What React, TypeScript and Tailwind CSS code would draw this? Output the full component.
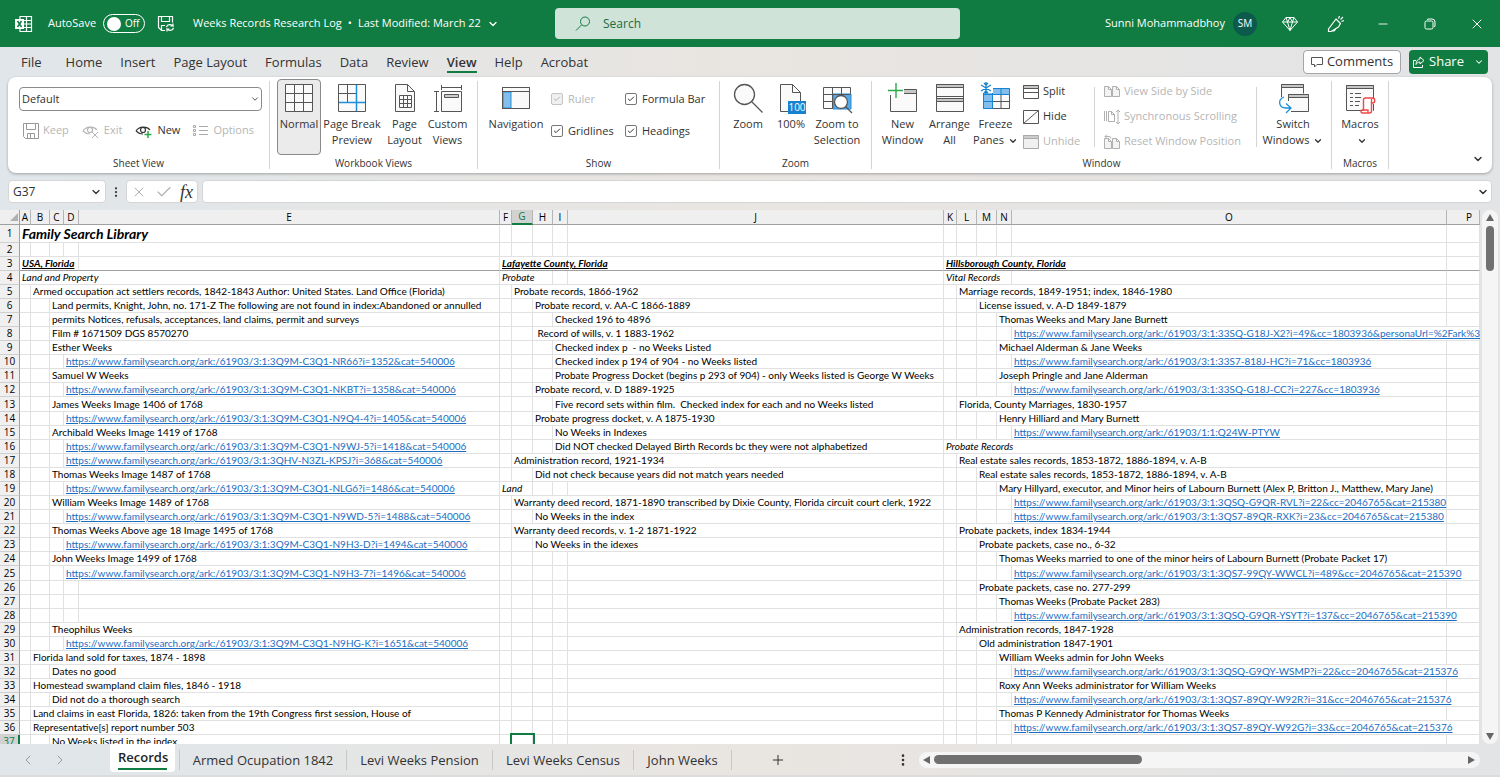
import { ReactNode } from "react";
import clsx from "clsx";
import { Check, ChevronDown, ChevronLeft, ChevronRight, Minus, Plus, X } from "lucide-react";
import { BsThreeDotsVertical } from "react-icons/bs";

type IconProps = {
  children: ReactNode;
  box?: string;
  className?: string;
};

const Icon = ({ children, box = "0 0 32 32", className = "size-8" }: IconProps) => (
  <svg viewBox={box} className={clsx("shrink-0", className)} fill="none" stroke="#555" aria-hidden="true">
    {children}
  </svg>
);

/* ---------- ribbon icons ---------- */

const NormalIcon = () => (
  <Icon>
    <path d="M2.5 2.5h27v27h-27z" fill="#fafafa" />
    <path d="M2.5 11.5h27M2.5 20.5h27M11.5 2.5v27M20.5 2.5v27" />
  </Icon>
);

const PageBreakIcon = () => (
  <Icon>
    <path d="M2.5 2.5h27v27h-27z" fill="#fafafa" />
    <path d="M2.5 11.5h18M11.5 2.5v18" />
    <path d="M20.5 3v26M3 20.5h26" stroke="#1e8fdc" strokeWidth="1.5" />
  </Icon>
);

const PageLayoutIcon = () => (
  <Icon>
    <path d="M6.5 2.5h12l7 7v20h-19z" fill="#fafafa" />
    <path d="M18.5 2.5v7h7M10.5 13.5h12v12h-12zM10.5 17.5h12M10.5 21.5h12M14.5 13.5v12M18.5 13.5v12" />
  </Icon>
);

const CustomViewsIcon = () => (
  <Icon>
    <path d="M9.5 9.5h20v20h-20z" fill="#fafafa" />
    <path d="M12.5 12.5h14v3h-14z" fill="#ccc" />
    <path d="M9.5 5.5h20M9.5 3v5M29.5 3v5M4.5 9.5v20M2 9.5h5M2 29.5h5" />
  </Icon>
);

const NavigationIcon = () => (
  <Icon>
    <path d="M2.5 5.5h27v21h-27z" fill="#fafafa" />
    <path d="M3 10h8v16H3z" fill="#83beec" stroke="#1e8fdc" />
    <path d="M2.5 5.5h27v21h-27zM2.5 9.5h27" />
  </Icon>
);

const ZoomIcon = () => (
  <Icon>
    <circle cx="12.5" cy="12.5" r="10" fill="#fafafa" strokeWidth="1.3" />
    <path d="M19.5 19.5l11 11" strokeWidth="1.3" />
  </Icon>
);

const HundredIcon = () => (
  <Icon>
    <path d="M5.5 2.5h12l8 8v19h-20z" fill="#fafafa" />
    <path d="M17.5 2.5v8h8" />
    <path d="M13 19h18v13H13z" fill="#1683d0" stroke="none" />
    <text x="22" y="29" textAnchor="middle" fontSize="10" fontFamily="Open Sans" fill="#fff" stroke="none">
      100
    </text>
  </Icon>
);

const ZoomSelectionIcon = () => (
  <Icon>
    <path d="M2.5 5.5h27v21h-27z" fill="#fafafa" />
    <path d="M12 12h18v15H12z" fill="#5aa9e6" stroke="#1e8fdc" />
    <path d="M2.5 12.5h27M2.5 19.5h9M11.5 5.5v21M20.5 5.5v7" />
    <circle cx="20" cy="20" r="6.5" fill="#fff" strokeWidth="1.3" />
    <path d="M24.5 24.5l6.5 6.5" strokeWidth="1.3" />
  </Icon>
);

const NewWindowIcon = () => (
  <Icon>
    <path d="M3.5 16v13.5h26v-22H17v4h-5" fill="#fafafa" stroke="none" />
    <path d="M17 8h12v3H17z" fill="#c8c6c4" stroke="none" />
    <path d="M3.5 13v16.5h26v-22H17M17 11.5h12.5" />
    <path d="M9 1v15M1 8.5h15" stroke="#2ba84a" strokeWidth="1.4" />
  </Icon>
);

const ArrangeIcon = () => (
  <Icon>
    <path d="M2.5 2.5h27v27h-27z" fill="#fafafa" />
    <path d="M2.5 2.5h27v3h-27zM2.5 16.5h27v3h-27z" fill="#c8c6c4" />
    <path d="M2.5 14.5h27" />
  </Icon>
);

const FreezeIcon = () => (
  <Icon>
    <path d="M3.5 6.5h26v20h-26z" fill="#fafafa" />
    <path d="M3 6h27v7H12v14H3z" fill="#83beec" stroke="none" />
    <path d="M12.5 12.5h17v14h-17zM12.5 19.5h17M21 12.5v14" />
    <path d="M3.5 26.5v-20h26v6h-26M12.5 6.5v20h-9M21 6.5v6M3.5 19.5h9" stroke="#1683d0" />
    <path d="M0 0h13v11H0z" fill="#fff" stroke="none" />
    <path d="M6 0v12M1 3l10 6M11 3L1 9M4 1l2 2 2-2M4 11l2-2 2 2" stroke="#1683d0" strokeWidth="1.3" />
  </Icon>
);

const SwitchIcon = () => (
  <Icon>
    <path d="M4.5 15V2.5h22v9" fill="#fafafa" />
    <path d="M4.5 2.5h22v3h-22z" fill="#c8c6c4" />
    <path d="M11.5 12.5h20v17h-20z" fill="#fafafa" />
    <path d="M11.5 12.5h20v3h-20z" fill="#c8c6c4" />
    <path d="M4 15h7v4h3v11H4z" fill="#fff" stroke="none" />
    <path d="M7 15c-7 3-5 11 2 11h5M9 21.5l5 4.5-5 5" stroke="#1e8fdc" strokeWidth="1.3" />
  </Icon>
);

const MacrosIcon = () => (
  <Icon>
    <path d="M2.5 3.5h27v25h-27z" fill="#fafafa" />
    <path d="M2.5 3.5h27v3h-27z" fill="#c8c6c4" />
    <path d="M6 11.5h3M11 11.5h6M6 15.5h3M11 15.5h6M6 19.5h3M11 19.5h5M6 23.5h3M11 23.5h4" />
    <path d="M19 16h13v6h-3v10H17v-5h2z" fill="#fff" stroke="none" />
    <path
      d="M19.5 28V18c0-1 1-2 2-2h7c3 0 3 5 0 5h-1v8c0 1-1 2-2 2h-7c-2 0-2-3 0-3z"
      fill="#fff"
      stroke="#f04848"
      strokeWidth="1.4"
    />
    <path d="M18 28h6v3M27.5 16.5V21" stroke="#f04848" strokeWidth="1.3" />
  </Icon>
);

const EyeIcon = ({ children }: { children: ReactNode }) => (
  <Icon box="0 0 18 16" className="h-4 w-[18px]">
    <path d="M1 8C4 3 12 3 15 7M1 8c2 2 4 3 7 3" stroke="currentColor" strokeWidth="1.2" />
    <circle cx="8" cy="7" r="2.5" stroke="currentColor" strokeWidth="1.2" />
    {children}
  </Icon>
);

const PairIcon = ({ children, y = 2 }: { children?: ReactNode; y?: number }) => (
  <Icon box="0 0 16 16" className="size-4">
    <g transform={`translate(0 ${y})`} stroke="#b0b0b0" fill="#f3f3f3">
      <path d="M.5.5h4l3 3v7h-7zM4.5.5v3h3" />
      <path d="M8.5.5h4l3 3v7h-7zM12.5.5v3h3" />
    </g>
    {children}
  </Icon>
);

const SyncIcon = () => (
  <Icon box="0 0 16 16" className="size-4">
    <g stroke="#b0b0b0">
      <path d="M.5 2v10M2.5 2v10M4.5 2.5h3l3 3v7h-6zM7.5 2.5v3h3M14 1v14M12 3l2-2 2 2M12 13l2 2 2-2" />
    </g>
  </Icon>
);

/* ---------- ribbon pieces ---------- */

const Caret = () => <ChevronDown className="ml-1 inline size-2.5" strokeWidth={3} />;

type BigButtonProps = {
  icon: ReactNode;
  lines: string[];
  width: string;
  caret?: boolean;
  active?: boolean;
};

const BigButton = ({ icon, lines, width, caret, active }: BigButtonProps) => (
  <button
    type="button"
    className={clsx(
      "flex h-[76px] shrink-0 flex-col items-center rounded border pt-0.5 leading-4 whitespace-nowrap",
      width,
      active ? "border-[#8a8a8a] bg-[#ebebeb]" : "border-transparent"
    )}
  >
    {icon}
    <span className="mt-0.5">{lines[0]}</span>
    <span>
      {lines[1]}
      {caret && <Caret />}
    </span>
  </button>
);

const Group = ({ label, width, children }: { label: string; width: string; children: ReactNode }) => (
  <section className={clsx("my-1 flex shrink-0 flex-col border-r border-[#d4d4d4]", width)}>
    <div className="-mt-0.5 flex flex-1">{children}</div>
    <div className="text-center text-[10px] leading-3">{label}</div>
  </section>
);

const SmallButton = ({ icon, label, disabled }: { icon: ReactNode; label: string; disabled?: boolean }) => (
  <button
    type="button"
    disabled={disabled}
    className="flex h-[25px] items-center gap-1 whitespace-nowrap disabled:text-[#b5b5b5]"
  >
    {icon}
    {label}
  </button>
);

const Tick = ({ label, checked = true, disabled }: { label: string; checked?: boolean; disabled?: boolean }) => (
  <label className={clsx("flex items-center gap-[5px] whitespace-nowrap", disabled && "text-[#b5b5b5]")}>
    <span className="grid size-3 place-items-center">
      <input
        type="checkbox"
        defaultChecked={checked}
        disabled={disabled}
        className="col-start-1 row-start-1 size-3 appearance-none rounded-xs border border-[#767676] bg-white disabled:border-[#c4c4c4] disabled:bg-[#f0f0f0]"
      />
      <Check className="pointer-events-none col-start-1 row-start-1 size-2" strokeWidth={3} />
    </span>
    {label}
  </label>
);

/* ---------- sheet data ---------- */

const columns = [
  { name: "A", width: "w-[11px]" },
  { name: "B", width: "w-[19px]" },
  { name: "C", width: "w-[14px]" },
  { name: "D", width: "w-[15px]" },
  { name: "E", width: "w-[421px]" },
  { name: "F", width: "w-[12px]" },
  { name: "G", width: "w-[21px]" },
  { name: "H", width: "w-[20px]" },
  { name: "I", width: "w-[15px]" },
  { name: "J", width: "w-[376px]" },
  { name: "K", width: "w-[13px]" },
  { name: "L", width: "w-[20px]" },
  { name: "M", width: "w-[20px]" },
  { name: "N", width: "w-[15px]" },
  { name: "O", width: "w-[435px]" },
  { name: "P", width: "" },
];

const ark = "https://www.familysearch.org/ark:/61903/";

// first column, last column, text
type Cell = [string, string, string];

const rows: Cell[][] = [
  [["A", "E", "Family Search Library"]],
  [],
  [["A", "D", "USA, Florida"], ["F", "J", "Lafayette County, Florida"], ["K", "O", "Hillsborough County, Florida"]],
  [["A", "E", "Land and Property"], ["F", "H", "Probate"], ["K", "N", "Vital Records"]],
  [
    ["B", "E", "Armed occupation act settlers records, 1842-1843 Author: United States. Land Office (Florida)"],
    ["G", "J", "Probate records, 1866-1962"],
    ["L", "O", "Marriage records, 1849-1951; index, 1846-1980"],
  ],
  [
    ["C", "E", "Land permits, Knight, John, no. 171-Z The following are not found in index:Abandoned or annulled"],
    ["H", "J", "Probate record, v. AA-C 1866-1889"],
    ["M", "O", "License issued, v. A-D 1849-1879"],
  ],
  [
    ["C", "E", "permits Notices, refusals, acceptances, land claims, permit and surveys"],
    ["I", "J", "Checked 196 to 4896"],
    ["N", "O", "Thomas Weeks and Mary Jane Burnett"],
  ],
  [
    ["C", "E", "Film # 1671509 DGS 8570270"],
    ["H", "J", " Record of wills, v. 1 1883-1962"],
    ["O", "P", ark + "3:1:33SQ-G18J-X2?i=49&cc=1803936&personaUrl=%2Fark%3A"],
  ],
  [
    ["C", "E", "Esther Weeks"],
    ["I", "J", "Checked index p  - no Weeks Listed"],
    ["N", "O", "Michael Alderman & Jane Weeks"],
  ],
  [
    ["D", "E", ark + "3:1:3Q9M-C3Q1-NR66?i=1352&cat=540006"],
    ["I", "J", "Checked index p 194 of 904 - no Weeks listed"],
    ["O", "O", ark + "3:1:33S7-818J-HC?i=71&cc=1803936"],
  ],
  [
    ["C", "E", "Samuel W Weeks"],
    ["I", "J", "Probate Progress Docket (begins p 293 of 904) - only Weeks listed is George W Weeks"],
    ["N", "O", "Joseph Pringle and Jane Alderman"],
  ],
  [
    ["D", "E", ark + "3:1:3Q9M-C3Q1-NKBT?i=1358&cat=540006"],
    ["H", "J", "Probate record, v. D 1889-1925"],
    ["O", "O", ark + "3:1:33SQ-G18J-CC?i=227&cc=1803936"],
  ],
  [
    ["C", "E", "James Weeks Image 1406 of 1768"],
    ["I", "J", "Five record sets within film.  Checked index for each and no Weeks listed"],
    ["L", "O", "Florida, County Marriages, 1830-1957"],
  ],
  [
    ["D", "E", ark + "3:1:3Q9M-C3Q1-N9Q4-4?i=1405&cat=540006"],
    ["H", "J", "Probate progress docket, v. A 1875-1930"],
    ["N", "O", "Henry Hilliard and Mary Burnett"],
  ],
  [
    ["C", "E", "Archibald Weeks Image 1419 of 1768"],
    ["I", "J", "No Weeks in Indexes"],
    ["O", "O", ark + "1:1:Q24W-PTYW"],
  ],
  [
    ["D", "E", ark + "3:1:3Q9M-C3Q1-N9WJ-5?i=1418&cat=540006"],
    ["I", "J", "Did NOT checked Delayed Birth Records bc they were not alphabetized"],
    ["K", "O", "Probate Records"],
  ],
  [
    ["D", "E", ark + "3:1:3QHV-N3ZL-KPSJ?i=368&cat=540006"],
    ["G", "J", "Administration record, 1921-1934"],
    ["L", "O", "Real estate sales records, 1853-1872, 1886-1894, v. A-B"],
  ],
  [
    ["C", "E", "Thomas Weeks Image 1487 of 1768"],
    ["H", "J", "Did not check because years did not match years needed"],
    ["M", "O", "Real estate sales records, 1853-1872, 1886-1894, v. A-B"],
  ],
  [
    ["D", "E", ark + "3:1:3Q9M-C3Q1-NLG6?i=1486&cat=540006"],
    ["F", "G", "Land"],
    ["N", "O", "Mary Hillyard, executor, and Minor heirs of Labourn Burnett (Alex P, Britton J., Matthew, Mary Jane)"],
  ],
  [
    ["C", "E", "William Weeks Image 1489 of 1768"],
    ["G", "J", "Warranty deed record, 1871-1890 transcribed by Dixie County, Florida circuit court clerk, 1922"],
    ["O", "O", ark + "3:1:3QSQ-G9QR-RVL?i=22&cc=2046765&cat=215380"],
  ],
  [
    ["D", "E", ark + "3:1:3Q9M-C3Q1-N9WD-5?i=1488&cat=540006"],
    ["H", "J", "No Weeks in the index"],
    ["O", "O", ark + "3:1:3QS7-89QR-RXK?i=23&cc=2046765&cat=215380"],
  ],
  [
    ["C", "E", "Thomas Weeks Above age 18 Image 1495 of 1768"],
    ["G", "J", "Warranty deed records, v. 1-2 1871-1922"],
    ["L", "O", "Probate packets, index 1834-1944"],
  ],
  [
    ["D", "E", ark + "3:1:3Q9M-C3Q1-N9H3-D?i=1494&cat=540006"],
    ["H", "J", "No Weeks in the idexes"],
    ["M", "O", "Probate packets, case no., 6-32"],
  ],
  [["C", "E", "John Weeks Image 1499 of 1768"], ["N", "O", "Thomas Weeks married to one of the minor heirs of Labourn Burnett (Probate Packet 17)"]],
  [
    ["D", "E", ark + "3:1:3Q9M-C3Q1-N9H3-7?i=1496&cat=540006"],
    ["O", "P", ark + "3:1:3QS7-99QY-WWCL?i=489&cc=2046765&cat=215390"],
  ],
  [["M", "O", "Probate packets, case no. 277-299"]],
  [["N", "O", "Thomas Weeks (Probate Packet 283)"]],
  [["O", "P", ark + "3:1:3QSQ-G9QR-YSYT?i=137&cc=2046765&cat=215390"]],
  [["C", "E", "Theophilus Weeks"], ["L", "O", "Administration records, 1847-1928"]],
  [["D", "E", ark + "3:1:3Q9M-C3Q1-N9HG-K?i=1651&cat=540006"], ["M", "O", "Old administration 1847-1901"]],
  [["B", "E", "Florida land sold for taxes, 1874 - 1898"], ["N", "O", "William Weeks admin for John Weeks"]],
  [["C", "E", "Dates no good"], ["O", "P", ark + "3:1:3QSQ-G9QY-WSMP?i=22&cc=2046765&cat=215376"]],
  [["B", "E", "Homestead swampland claim files, 1846 - 1918"], ["N", "O", "Roxy Ann Weeks administrator for William Weeks"]],
  [["C", "E", "Did not do a thorough search"], ["O", "P", ark + "3:1:3QS7-89QY-W92R?i=31&cc=2046765&cat=215376"]],
  [
    ["B", "E", "Land claims in east Florida, 1826: taken from the 19th Congress first session, House of"],
    ["N", "O", "Thomas P Kennedy Administrator for Thomas Weeks"],
  ],
  [["B", "E", "Representative[s] report number 503"], ["O", "P", ark + "3:1:3QS7-89QY-W92G?i=33&cc=2046765&cat=215376"]],
  [["C", "E", "No Weeks listed in the index"]],
];

const italics = ["Land and Property", "Probate", "Vital Records", "Probate Records", "Land"];

const SheetRow = ({ cells, index }: { cells: Cell[]; index: number }) => {
  const number = index + 1;
  const out: ReactNode[] = [];
  let i = 0;
  while (i < columns.length) {
    const name = columns[i].name;
    const cell = cells.find((c) => c[0] === name);
    const span = cell ? columns.findIndex((c) => c.name === cell[1]) - i + 1 : 1;
    const text = cell ? cell[2] : "";
    out.push(
      <td
        key={name}
        colSpan={span}
        className={clsx(
          "border-r border-b border-r-[#e1e1e1] p-0 pl-0.5 whitespace-pre",
          number === 3 ? "border-b-[#a0a0a0] font-bold italic" : "border-b-[#e1e1e1]",
          number === 1 && "text-sm leading-[17px] font-bold italic",
          italics.includes(text) && "italic",
          number === 37 && name === "G" && "outline-2 outline-[#107c41]"
        )}
      >
        {text.startsWith("https") ? (
          <a href={text} className="text-[#1b6ec2] underline">
            {text}
          </a>
        ) : number === 3 ? (
          <span className="underline">{text}</span>
        ) : (
          text
        )}
      </td>
    );
    i += span;
  }
  return (
    <tr className={number === 1 ? "h-[18px]" : number === 13 || number === 25 ? "h-[15px]" : "h-[14px]"}>
      <th
        scope="row"
        className={clsx(
          "border-b border-b-[#d0d0d0] p-0 text-center font-[Open_Sans,sans-serif] font-normal",
          number === 37
            ? "border-r-2 border-r-[#107c41] bg-[#d2d2d2] text-[#107c41]"
            : "border-r border-r-[#a0a0a0] bg-[#f0f0f0]"
        )}
      >
        {number}
      </th>
      {out}
    </tr>
  );
};

const Sheet = () => (
  <table className="w-full table-fixed border-separate border-spacing-0 bg-white font-[Lato,sans-serif] text-[10px] leading-[13px] text-black">
    <colgroup>
      <col className="w-5" />
      {columns.map((c) => (
        <col key={c.name} className={c.width} />
      ))}
    </colgroup>
    <thead>
      <tr className="h-[15px] bg-[#efefef]">
        <th className="border-r border-b border-[#a0a0a0] p-0">
          <svg viewBox="0 0 10 10" className="ml-auto size-2.5" aria-hidden="true">
            <path d="M9 1v8H1z" fill="#b0b0b0" />
          </svg>
        </th>
        {columns.map((c) => (
          <th
            key={c.name}
            scope="col"
            className={clsx(
              "border-r border-r-[#b5b5b5] p-0 text-center font-[Open_Sans,sans-serif] font-normal",
              c.name === "G" ? "border-b-2 border-b-[#107c41] bg-[#d2d2d2] text-[#107c41]" : "border-b border-b-[#a0a0a0]",
              c.name === "P" && "pl-3"
            )}
          >
            {c.name}
          </th>
        ))}
      </tr>
    </thead>
    <tbody>
      {rows.map((cells, i) => (
        <SheetRow key={i} cells={cells} index={i} />
      ))}
    </tbody>
  </table>
);

/* ---------- window parts ---------- */

const TitleBar = () => (
  <header className="grid h-[47px] shrink-0 grid-cols-[37%_27%_36%] items-center bg-[#107c41] text-[11px] text-white">
    <div className="flex items-center pl-[15px] whitespace-nowrap">
      <Icon box="0 0 18 18" className="mr-[15px] size-[18px]">
        <path d="M5 4V1.5h11.5v15H5V14M5.5 5.5h11M5.5 9h11M5.5 12.5h11M11.5 1.5v15" stroke="#fff" strokeWidth="1.2" />
        <path d="M0 4h9v10H0z" fill="#fff" stroke="none" />
        <path d="M2.5 6l4 6M6.5 6l-4 6" stroke="#107c41" strokeWidth="1.5" />
      </Icon>
      <span className="w-[49px]">AutoSave</span>
      <button
        type="button"
        role="switch"
        aria-checked="false"
        aria-label="AutoSave"
        className="mr-3 ml-1.5 flex h-[19px] w-[42px] items-center gap-1 rounded-full border border-white pl-[3px] text-[10px]"
      >
        <span className="size-3.5 rounded-full bg-white" />
        Off
      </button>
      <button type="button" aria-label="Save" className="mr-[18px]">
        <Icon box="0 0 18 18" className="size-[18px]">
          <g stroke="#fff" strokeWidth="1.2">
            <path d="M8 15.5H4.500l-3-3v-11h14v6M4.5 1.5v5h8v-5M4.5 15.5v-5H8" />
            <path d="M9.5 12c1-3 5-3 6.5-1V8.5M16.5 13c-1 3-5 3-6.5 1v2.5M16 11h-2.5M10 14h2.5" />
          </g>
        </Icon>
      </button>
      <button type="button" className="flex items-center gap-1.5">
        <span>Weeks Records Research Log</span>
        <span>•</span>
        <span>Last Modified: March 22</span>
        <ChevronDown className="size-3" strokeWidth={2.5} />
      </button>
    </div>
    <label className="flex h-[31px] items-center gap-3 rounded bg-[#cfe3d8] pl-5">
      <Icon box="0 0 16 16" className="size-4">
        <circle cx="10" cy="5.5" r="4.5" stroke="#107c41" />
        <path d="M6.5 9L1 14.5" stroke="#107c41" />
      </Icon>
      <input
        type="text"
        aria-label="Search"
        placeholder="Search"
        className="w-full bg-transparent text-xs outline-none placeholder:text-[#1d6b41]"
      />
    </label>
    <div className="flex items-center justify-end whitespace-nowrap">
      <span>Sunni Mohammadbhoy</span>
      <span className="mr-2.5 ml-2 grid size-6 place-items-center rounded-full bg-[#0b5a4c] text-[10px]">SM</span>
      <button type="button" aria-label="Premium" className="flex w-[46px] justify-center">
        <Icon box="0 0 16 16" className="size-4">
          <path
            d="M4 1.5h8l3.5 4.5L8 14.5.5 6zM.5 6h15M4 1.5L5.5 6 8 14.5 10.5 6 12 1.5M5.5 6L8 1.5 10.5 6"
            stroke="#fff"
            strokeLinejoin="round"
          />
        </Icon>
      </button>
      <button type="button" aria-label="Coming soon" className="flex w-[46px] justify-center">
        <Icon box="0 0 18 18" className="size-[18px]">
          <g stroke="#fff" strokeWidth="1.2" strokeLinejoin="round">
            <path d="M9 4l4.5 4.5-2 3.5L4 16.5H1.5V14zM5 15.5c1.5 1 3.5 0 3.5-2M11.5 3.5l1-2.5M13.5 4.5L16 2M14.5 6.5l2.5-1" />
          </g>
        </Icon>
      </button>
      <button type="button" aria-label="Minimize" className="flex w-[47px] justify-center">
        <Minus className="size-3.5" strokeWidth={1.5} />
      </button>
      <button type="button" aria-label="Restore" className="flex w-[47px] justify-center">
        <Icon box="0 0 12 12" className="size-3">
          <path d="M1 4.500q0-1.500 1.500-1.500h5Q9 3 9 4.500v5Q9 11 7.500 11h-5Q1 11 1 9.500zM3 1.500Q4 1 5 1h3q3 0 3 3v3q0 1-.5 2" stroke="#fff" />
        </Icon>
      </button>
      <button type="button" aria-label="Close" className="flex w-[47px] justify-center">
        <X className="size-4" strokeWidth={1.5} />
      </button>
    </div>
  </header>
);

const menu = ["Home", "Insert", "Page Layout", "Formulas", "Data", "Review", "View", "Help", "Acrobat"];

const MenuBar = () => (
  <nav className="flex h-[30px] shrink-0 items-center pr-3 pl-[21px] text-[13px]">
    <button type="button" className="mr-6 leading-[18px]">File</button>
    <div className="flex gap-[18px] whitespace-nowrap">
      {menu.map((item) => (
        <button
          type="button"
          key={item}
          className={clsx(
            "h-[22px] border-y-2 border-t-transparent leading-[18px]",
            item === "View" ? "border-b-[#107c41] font-semibold" : "border-b-transparent"
          )}
        >
          {item}
        </button>
      ))}
    </div>
    <button type="button" className="ml-auto flex h-6 w-[98px] items-center justify-center gap-1 rounded border border-[#a5a5a5] bg-white">
      <Icon box="0 0 12 12" className="size-3">
        <path d="M.5 1.5h11v7H6L3.5 11V8.5h-3z" />
      </Icon>
      Comments
    </button>
    <button type="button" className="ml-2 flex h-6 w-[79px] items-center justify-center gap-1 rounded bg-[#107c41] text-white">
      <Icon box="0 0 12 12" className="size-3">
        <path d="M3 4.5H.5v7h9V9M7 1l4 3.5L7 8V6C5 6 4 7 3 8.5 3 5 5 3 7 3z" stroke="#fff" />
      </Icon>
      Share
      <ChevronDown className="ml-1.5 size-2.5" strokeWidth={2.5} />
    </button>
  </nav>
);

const Ribbon = () => (
  <div className="mx-2 flex h-24 shrink-0 rounded-lg bg-white text-[11px] shadow-[0_1px_3px_rgba(0,0,0,0.3)]">
    <Group label="Sheet View" width="w-[262px]">
      <div className="flex-1 pt-2 pr-[7px] pl-[11px]">
        <div className="grid items-center">
          <select
            aria-label="Sheet view"
            className="col-start-1 row-start-1 h-6 w-full appearance-none rounded border border-[#8a8a8a] bg-white pl-0.5"
          >
            <option>Default</option>
          </select>
          <ChevronDown className="pointer-events-none col-start-1 row-start-1 mr-0.5 size-2.5 justify-self-end" />
        </div>
        <div className="mt-[7px] flex justify-between pr-2 pl-1">
          <SmallButton
            disabled
            label="Keep"
            icon={
              <Icon box="0 0 16 16" className="size-4">
                <path d="M.5.5h15v15h-13l-2-2zM3.5.5v6h9v-6M4.5 15.5v-5h7v5M7.5 10.5v5" stroke="#999" />
              </Icon>
            }
          />
          <SmallButton
            disabled
            label="Exit"
            icon={
              <EyeIcon>
                <path d="M10 9l6 6M16 9l-6 6" stroke="currentColor" />
              </EyeIcon>
            }
          />
          <SmallButton
            label="New"
            icon={
              <EyeIcon>
                <path d="M13 8v7M9.5 11.5h7" stroke="#2ba84a" strokeWidth="1.5" />
              </EyeIcon>
            }
          />
          <SmallButton
            disabled
            label="Options"
            icon={
              <Icon box="0 0 16 16" className="size-4">
                <path d="M.5 2.5h2v2h-2zM.5 6.5h2v2h-2zM.5 10.5h2v2h-2zM6 3.5h9M6 7.5h9M6 11.5h9" stroke="#aaa" />
              </Icon>
            }
          />
        </div>
      </div>
    </Group>
    <Group label="Workbook Views" width="w-[208px]">
      <div className="flex pl-[7px]">
        <BigButton active width="w-11" icon={<NormalIcon />} lines={["Normal"]} />
        <BigButton width="w-[62px]" icon={<PageBreakIcon />} lines={["Page Break", "Preview"]} />
        <BigButton width="w-[43px]" icon={<PageLayoutIcon />} lines={["Page", "Layout"]} />
        <BigButton width="w-[43px]" icon={<CustomViewsIcon />} lines={["Custom", "Views"]} />
      </div>
    </Group>
    <Group label="Show" width="w-[242px]">
      <BigButton width="ml-2 w-[60px]" icon={<NavigationIcon />} lines={["Navigation"]} />
      <div className="ml-[5px] grid grid-cols-[74px_auto] content-start gap-y-4 pt-3 leading-4">
        <Tick label="Ruler" disabled />
        <Tick label="Formula Bar" />
        <Tick label="Gridlines" />
        <Tick label="Headings" />
      </div>
    </Group>
    <Group label="Zoom" width="w-[152px]">
      <div className="flex pl-1.5">
        <BigButton width="w-11" icon={<ZoomIcon />} lines={["Zoom"]} />
        <BigButton width="w-[42px]" icon={<HundredIcon />} lines={["100%"]} />
        <BigButton width="w-[50px]" icon={<ZoomSelectionIcon />} lines={["Zoom to", "Selection"]} />
      </div>
    </Group>
    <Group label="Window" width="w-[460px]">
      <div className="flex pl-[7px]">
        <BigButton width="w-[47px]" icon={<NewWindowIcon />} lines={["New", "Window"]} />
        <BigButton width="w-[47px]" icon={<ArrangeIcon />} lines={["Arrange", "All"]} />
        <BigButton width="w-[45px]" icon={<FreezeIcon />} lines={["Freeze", "Panes"]} caret />
        <div className="ml-[5px] w-[71px]">
          <SmallButton
            label="Split"
            icon={
              <Icon box="0 0 16 16" className="size-4">
                <path d="M.5 1.5h15v13H.5zM.5 8.5h15" />
                <path d="M.5 1.5h15v3H.5z" fill="#c8c6c4" />
              </Icon>
            }
          />
          <SmallButton
            label="Hide"
            icon={
              <Icon box="0 0 16 16" className="size-4">
                <path d="M.5 1.5h15v13H.5zM.5 14.5l15-13" />
              </Icon>
            }
          />
          <SmallButton
            disabled
            label="Unhide"
            icon={
              <Icon box="0 0 16 16" className="size-4">
                <path d="M.5 1.5h15v13H.5z" fill="#f0f0f0" stroke="#aaa" />
                <path d="M.5 1.5h15v3H.5z" fill="#ccc" stroke="#aaa" />
              </Icon>
            }
          />
        </div>
        <div className="my-2 h-[60px] w-[163px] border-x border-[#d4d4d4] pl-[9px]">
          <div className="-mt-2">
            <SmallButton disabled label="View Side by Side" icon={<PairIcon />} />
            <SmallButton disabled label="Synchronous Scrolling" icon={<SyncIcon />} />
            <SmallButton
              disabled
              label="Reset Window Position"
              icon={
                <PairIcon y={4}>
                  <path d="M1 2.5h4q2 0 2 2M3 .5l-2 2 2 2" stroke="#b0b0b0" />
                </PairIcon>
              }
            />
          </div>
        </div>
        <BigButton width="w-[72px]" icon={<SwitchIcon />} lines={["Switch", "Windows"]} caret />
      </div>
    </Group>
    <Group label="Macros" width="w-[57px]">
      <BigButton width="w-14" icon={<MacrosIcon />} lines={["Macros", ""]} caret />
    </Group>
    <button type="button" aria-label="Collapse ribbon" className="mt-auto mr-2 mb-2 ml-auto">
      <ChevronDown className="size-3" strokeWidth={3} />
    </button>
  </div>
);

const FormulaBar = () => (
  <div className="flex shrink-0 items-center px-2 py-[7px] text-xs">
    <div className="grid w-[98px] items-center">
      <input
        aria-label="Name box"
        defaultValue="G37"
        className="col-start-1 row-start-1 h-[23px] w-full rounded border border-[#d5d5d5] bg-white pl-1"
      />
      <ChevronDown className="col-start-1 row-start-1 mr-1 size-3 justify-self-end" strokeWidth={2.5} />
    </div>
    <BsThreeDotsVertical className="mx-1 size-3" />
    <div className="flex h-[23px] w-[72px] items-center justify-between rounded border border-[#d5d5d5] bg-white px-1">
      <button type="button" aria-label="Cancel">
        <X className="size-4 text-[#b0b0b0]" strokeWidth={1.5} />
      </button>
      <button type="button" aria-label="Enter">
        <Check className="size-[18px] text-[#b0b0b0]" strokeWidth={1.5} />
      </button>
      <button type="button" className="font-[Liberation_Serif,serif] text-lg leading-5 font-medium italic">
        fx
      </button>
    </div>
    <label className="ml-1 flex h-[23px] flex-1 items-center rounded border border-[#d5d5d5] bg-white pr-0.5">
      <input aria-label="Formula" className="h-full flex-1 outline-none" />
      <ChevronDown className="size-3" strokeWidth={3} />
    </label>
  </div>
);

const Arrow = ({ d }: { d: string }) => (
  <svg viewBox="0 0 10 10" className="size-2.5 shrink-0" fill="#666" aria-hidden="true">
    <path d={d} />
  </svg>
);

const SheetTabs = () => (
  <footer className="flex h-[33px] shrink-0 items-start border-b-2 border-[#dcdcdc] pr-5 text-[13px] text-[#333]">
    <div className="flex h-[31px] w-[110px] items-center gap-4 pl-5 text-[#999]">
      <button type="button" aria-label="Previous sheet">
        <ChevronLeft className="size-4" strokeWidth={1.5} />
      </button>
      <button type="button" aria-label="Next sheet">
        <ChevronRight className="size-4" strokeWidth={1.5} />
      </button>
    </div>
    <button type="button" className="h-7 w-[65px] rounded-b bg-white px-2 font-semibold text-[#222]">
      <span className="block border-b-2 border-[#107c41] leading-[22px]">Records</span>
    </button>
    <div className="ml-1 flex h-[31px] items-center whitespace-nowrap">
      <button type="button" className="h-5 w-[168px] border-x border-[#c8c8c8] leading-5">Armed Ocupation 1842</button>
      <button type="button" className="h-5 w-[146px] border-r border-[#c8c8c8] leading-5">Levi Weeks Pension</button>
      <button type="button" className="h-5 w-[141px] border-r border-[#c8c8c8] leading-5">Levi Weeks Census</button>
      <button type="button" className="h-5 w-[98px] border-r border-[#c8c8c8] leading-5">John Weeks</button>
      <button type="button" aria-label="New sheet" className="ml-[38px]">
        <Plus className="size-4" strokeWidth={1.5} />
      </button>
    </div>
    <div className="ml-auto flex h-[31px] w-[584px] items-center gap-[9px]">
      <BsThreeDotsVertical className="size-3.5" />
      <div className="flex h-4 flex-1 items-center rounded-full bg-[#f5f5f5] pr-1 pl-[3px]">
        <Arrow d="M8 1v8L1 5z" />
        <div className="ml-0.5 h-[9px] w-[208px] rounded-full bg-[#707070]" />
        <span className="ml-auto" />
        <Arrow d="M2 1v8l7-4z" />
      </div>
    </div>
  </footer>
);

const App = () => {
  return (
    <div className="flex h-screen flex-col overflow-hidden bg-linear-to-r from-[#e0e6ea] via-[#e9e5e1] to-[#e2e4e6] font-[Open_Sans,sans-serif] text-[#333]">
      <TitleBar />
      <MenuBar />
      <Ribbon />
      <FormulaBar />
      <main className="flex min-h-0 flex-1">
        <div className="min-w-0 flex-1 overflow-hidden">
          <Sheet />
        </div>
        <div className="mx-0.5 flex w-4 flex-col items-center rounded-full bg-[#f5f5f5] py-[3px]">
          <Arrow d="M1 8h8L5 1z" />
          <div className="mt-[3px] h-[45px] w-2 rounded-full bg-[#707070]" />
          <span className="mt-auto" />
          <Arrow d="M1 2h8L5 9z" />
        </div>
      </main>
      <SheetTabs />
    </div>
  );
};

export default App;
